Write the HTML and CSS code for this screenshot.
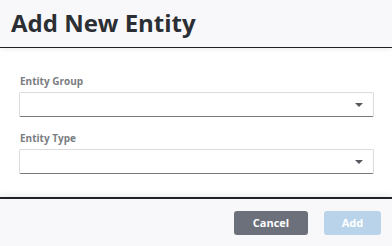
FILE: index.html
```html
<!DOCTYPE html>
<html lang="en">
<head>
    <meta charset="UTF-8">
    <meta name="viewport" content="width=device-width, initial-scale=1.0">
    <title>Add New Entity</title>
    <link rel="stylesheet" href="styles.css">
</head>
<body>
    <div class="dialog">
        <header class="dialog-header">
            <h1>Add New Entity</h1>
        </header>

        <div class="dialog-body">
            <div class="field">
                <label for="entityGroup">Entity Group</label>
                <div class="select" id="entityGroup">
                    <span class="caret"></span>
                </div>
            </div>
            <div class="field">
                <label for="entityType">Entity Type</label>
                <div class="select" id="entityType">
                    <span class="caret"></span>
                </div>
            </div>
        </div>

        <footer class="dialog-footer">
            <button class="btn btn-cancel">Cancel</button>
            <button class="btn btn-add" disabled>Add</button>
        </footer>
    </div>
</body>
</html>
```

FILE: styles.css
```css
* {
    margin: 0;
    padding: 0;
    box-sizing: border-box;
}

body {
    font-family: "Open Sans", Arial, sans-serif;
    background-color: #ffffff;
    width: 392px;
    height: 246px;
    overflow: hidden;
}

.dialog {
    display: flex;
    flex-direction: column;
    height: 246px;
}

/* header */
.dialog-header {
    height: 48px;
    background-color: #f8f8fa;
    border-bottom: 1px solid #1f2226;
    padding-left: 11px;
    display: flex;
    align-items: center;
    box-shadow: 0 2px 4px rgba(0, 0, 0, 0.06);
    position: relative;
    z-index: 1;
}

.dialog-header h1 {
    font-size: 24px;
    font-weight: 700;
    color: #2b2f34;
    line-height: 1;
    margin-top: -1px;
}

/* body */
.dialog-body {
    flex: 1;
    padding: 27px 18px 0 19px;
}

.field {
    margin-bottom: 15px;
}

.field label {
    display: block;
    font-size: 10px;
    font-weight: 700;
    color: #7a7d81;
    line-height: 12px;
    margin-bottom: 5px;
    padding-left: 1px;
}

.select {
    height: 25px;
    border: 1px solid #dcdcdc;
    border-bottom: 1px solid #777a7e;
    border-radius: 2px;
    background-color: #fff;
    display: flex;
    align-items: center;
    justify-content: flex-end;
    padding-right: 10px;
}

.caret {
    width: 0;
    height: 0;
    border-left: 4px solid transparent;
    border-right: 4px solid transparent;
    border-top: 4px solid #55585c;
}

/* footer */
.dialog-footer {
    height: 49px;
    background-color: #f8f8fa;
    border-top: 2px solid #1f2226;
    box-shadow: 0 -3px 5px rgba(0, 0, 0, 0.06);
    display: flex;
    justify-content: flex-end;
    align-items: center;
    padding-right: 11px;
    gap: 16px;
}

.btn {
    font-family: "Open Sans", Arial, sans-serif;
    font-size: 11px;
    font-weight: 700;
    color: #fff;
    border: none;
    border-radius: 3px;
    height: 24px;
}

.btn-cancel {
    width: 74px;
    background-color: #6c707a;
}

.btn-add {
    width: 57px;
    background-color: #b9d4ea;
}
```
